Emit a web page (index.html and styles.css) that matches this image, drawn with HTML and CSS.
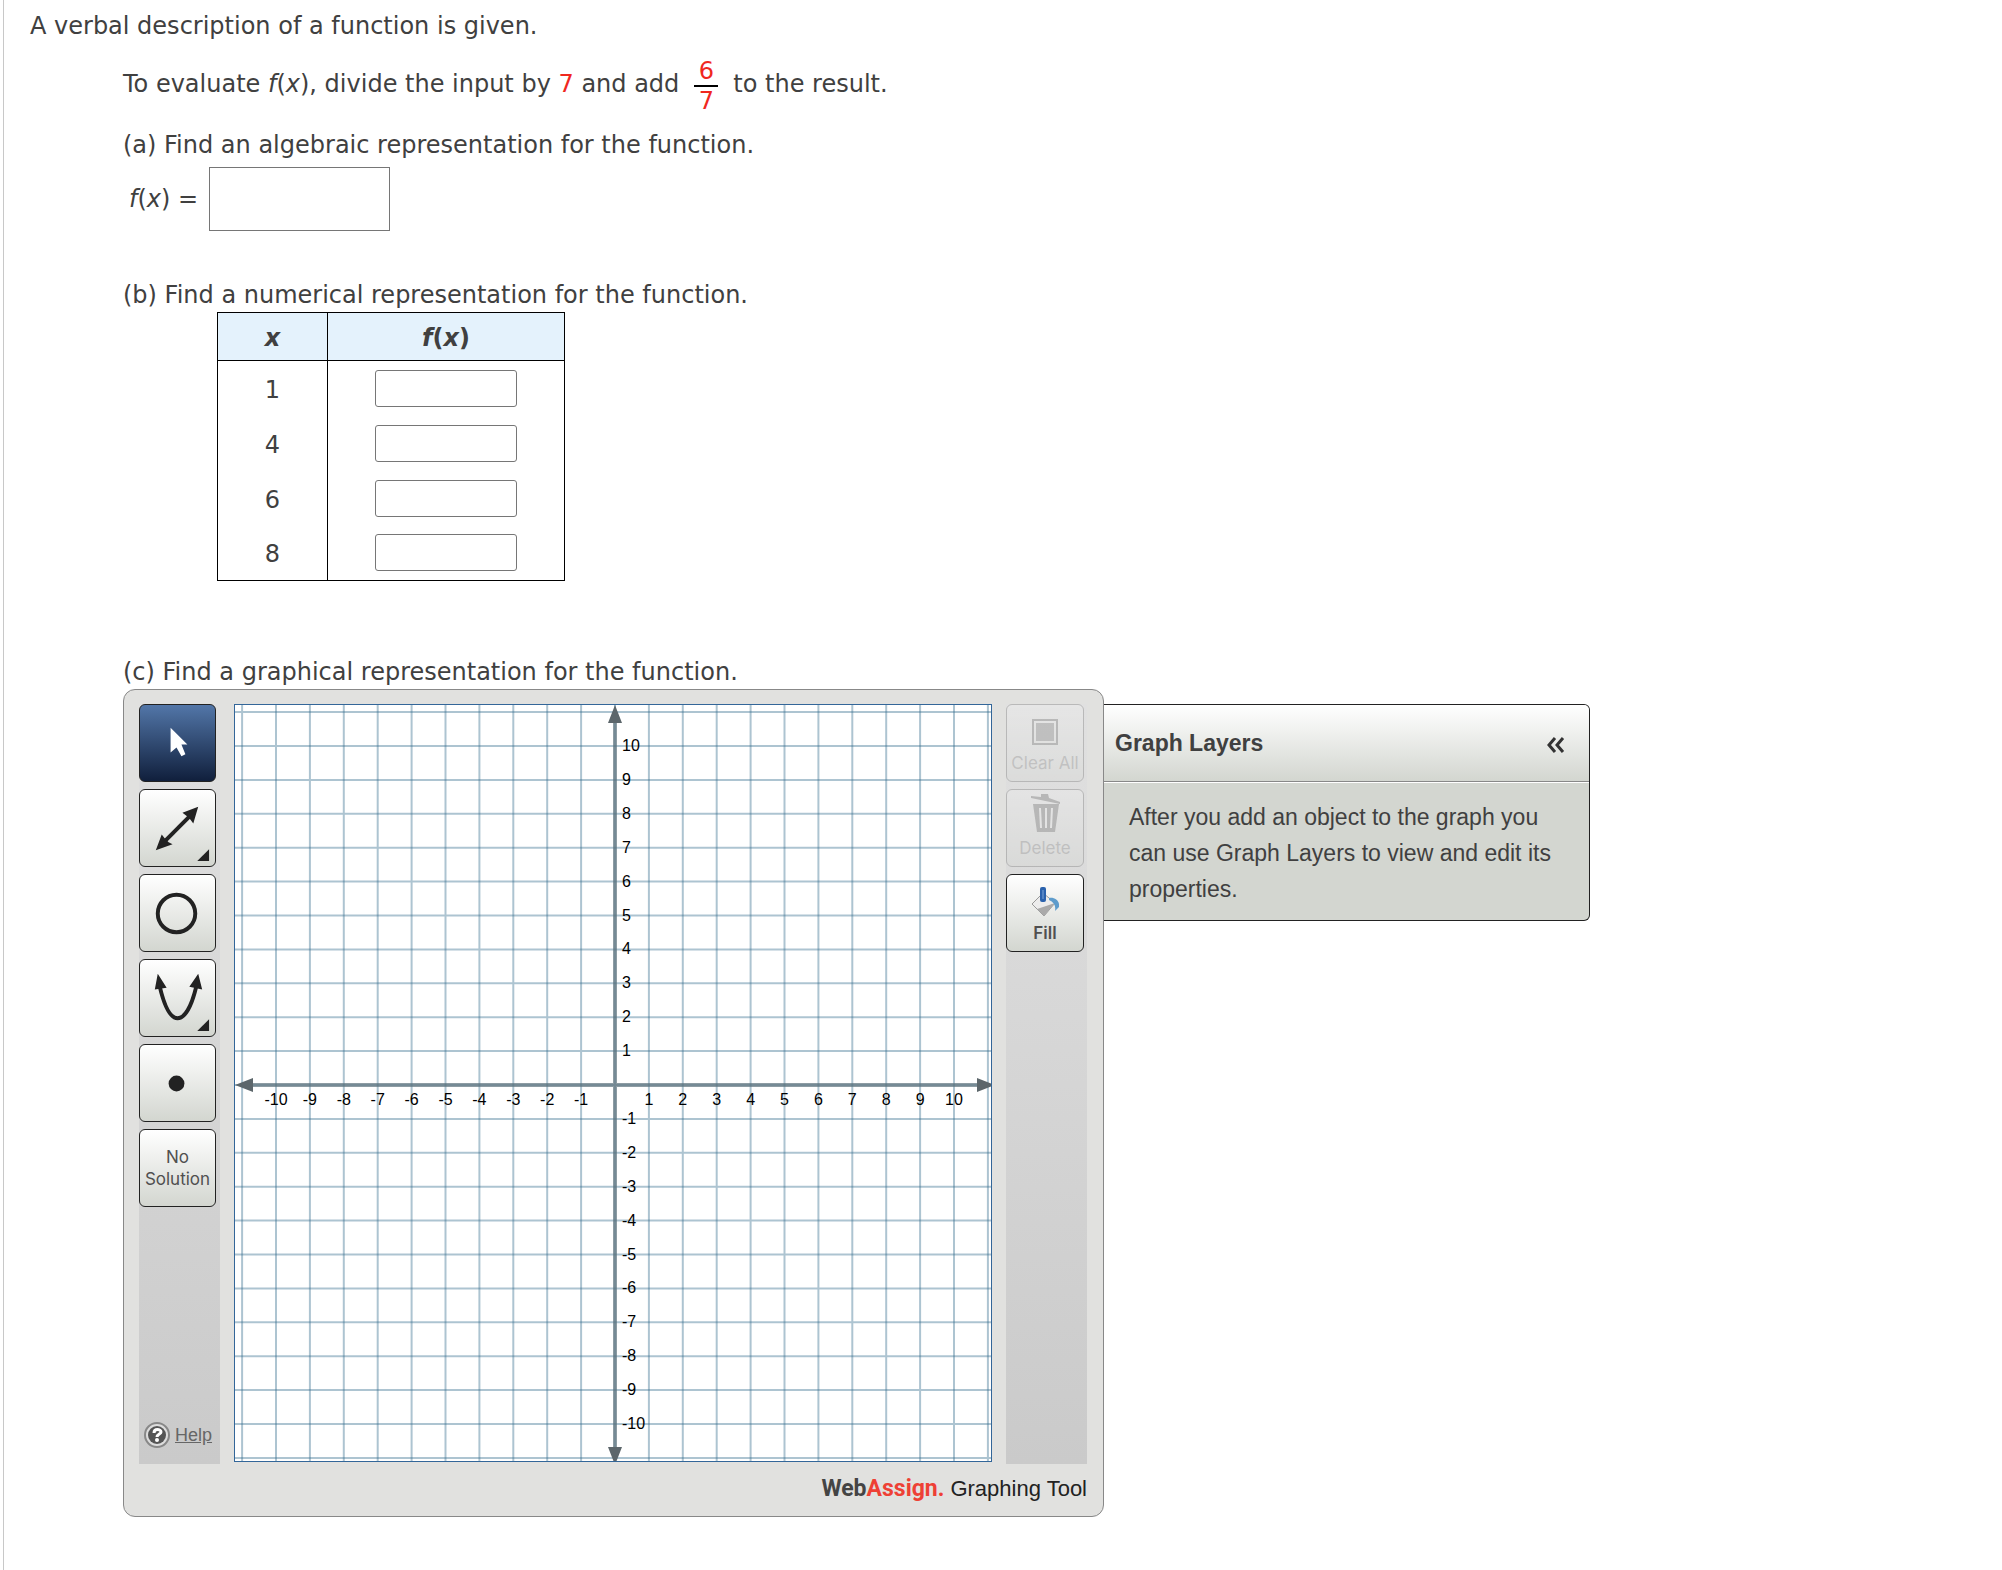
FILE: index.html
```html
<!DOCTYPE html>
<html lang="en">
<head>
    <meta charset="UTF-8">
    <meta name="viewport" content="width=device-width, initial-scale=1.0">
    <title>Representations of a Function</title>
    <link rel="stylesheet" href="styles.css">
</head>
<body>
    <main class="question">
        <p class="intro">A verbal description of a function is given.</p>

        <div class="parts">
            <p class="statement">
                <span>To evaluate <i>f</i>(<i>x</i>), divide the input by <span class="value">7</span> and add</span>
                <span class="fraction">
                    <span class="numerator value">6</span>
                    <span class="value">7</span>
                </span>
                <span>to the result.</span>
            </p>

            <section class="part-a">
                <p>(a) Find an algebraic representation for the function.</p>
                <div class="answer">
                    <label for="formula"><i>f</i>(<i>x</i>) =</label>
                    <input class="formula" id="formula" type="text">
                </div>
            </section>

            <section class="part-b">
                <p>(b) Find a numerical representation for the function.</p>
                <table class="values">
                    <thead>
                        <tr><th class="col-x"><i>x</i></th><th class="col-f"><i>f</i>(<i>x</i>)</th></tr>
                    </thead>
                    <tbody>
                        <tr><td><label for="f1">1</label></td><td><input id="f1" type="text"></td></tr>
                        <tr><td><label for="f4">4</label></td><td><input id="f4" type="text"></td></tr>
                        <tr><td><label for="f6">6</label></td><td><input id="f6" type="text"></td></tr>
                        <tr><td><label for="f8">8</label></td><td><input id="f8" type="text"></td></tr>
                    </tbody>
                </table>
            </section>

            <section class="part-c">
                <p>(c) Find a graphical representation for the function.</p>
                <div class="graph-row">
                    <div class="graph-tool">
                        <div class="workspace">
                            <div class="toolbar">
                                <button class="tool active" type="button" aria-label="Select">
                                    <svg viewBox="0 0 76 76"><path d="M31 22v25l6-5 5 9 4-2-4-10h6z" fill="#fff"/></svg>
                                </button>
                                <button class="tool" type="button" aria-label="Line">
                                    <svg viewBox="0 0 76 76">
                                        <path d="M24 52L52 24" stroke="#222" stroke-width="4"/>
                                        <path d="M59 16l-16 6 4 3 4 4 3 4zM16 60l6-16 3 4 4 4 4 2z" fill="#222"/>
                                        <path d="M70 59v12H58z" fill="#222"/>
                                    </svg>
                                </button>
                                <button class="tool" type="button" aria-label="Circle">
                                    <svg viewBox="0 0 76 76"><circle cx="37" cy="38" r="19" fill="none" stroke="#222" stroke-width="4"/></svg>
                                </button>
                                <button class="tool" type="button" aria-label="Parabola">
                                    <svg viewBox="0 0 76 76">
                                        <path d="M20 26C25 47 31 58 38 58S52 47 57 26" fill="none" stroke="#222" stroke-width="4"/>
                                        <path d="M18 13l9 14-12 2zM59 13l4 16-13-3z" fill="#222"/>
                                        <path d="M70 59v12H58z" fill="#222"/>
                                    </svg>
                                </button>
                                <button class="tool" type="button" aria-label="Point">
                                    <svg viewBox="0 0 76 76"><circle cx="37" cy="38" r="8" fill="#222"/></svg>
                                </button>
                                <button class="tool" type="button">No<br>Solution</button>
                                <a class="help" href="#help">
                                    <svg class="help-icon" viewBox="0 0 26 26">
                                        <circle cx="13" cy="13" r="12" fill="#ddd" stroke="#888" stroke-width="2"/>
                                        <circle cx="13" cy="13" r="9" fill="#555"/>
                                        <path d="M10 11c0-5 7-4 7-1 0 2-4 2-4 5" fill="none" stroke="#fff" stroke-width="3"/>
                                        <circle cx="13" cy="18" r="2" fill="#fff"/>
                                    </svg>
                                    <span>Help</span>
                                </a>
                            </div>

                            <svg class="graph" id="graph" viewBox="0 0 756 756" role="img" aria-label="Coordinate plane">
                                <g class="grid" id="grid"></g>
                                <path class="axis" d="M6 380H750M380 6V750"/>
                                <path class="arrow" d="M0 380l18-7v14zM760 380l-18-7v14zM380 0l-7 18h14zM380 760l-7-18h14z"/>
                                <g class="ticks" id="ticks"></g>
                            </svg>

                            <div class="toolbar">
                                <button class="tool action" type="button" disabled>
                                    <svg class="action-icon" viewBox="0 0 28 32">
                                        <rect x="2" y="4" width="24" height="24" fill="none" stroke="#222" stroke-width="2"/>
                                        <rect x="5" y="7" width="18" height="18" fill="#444"/>
                                    </svg>
                                    <span>Clear All</span>
                                </button>
                                <button class="tool action" type="button" disabled>
                                    <svg class="trash-icon" viewBox="0 0 32 40">
                                        <path d="M2 3l10 1V1h7l1 4 11 4v2L2 5z" fill="#222"/>
                                        <path d="M4 11h26l-4 28H8z" fill="#222"/>
                                        <path d="M11 15l1 20M17 15v20M23 15l-1 20" stroke="#fff" stroke-width="2"/>
                                    </svg>
                                    <span>Delete</span>
                                </button>
                                <button class="tool action" type="button">
                                    <svg class="action-icon" viewBox="0 0 28 32">
                                        <path d="M1 18l11-11 12 10-11 13z" fill="#ececec" stroke="#999"/>
                                        <path d="M6 23l18-6-11 13z" fill="#aaa"/>
                                        <path d="M18 12c6-1 11 3 10 9l-4 4c1-5-1-9-6-11z" fill="#5e9ccc"/>
                                        <rect x="9" y="1" width="6" height="15" rx="2" fill="#2b62ad"/>
                                        <path d="M12 4v9" stroke="#5585c4" stroke-width="2"/>
                                    </svg>
                                    <span class="fill-label">Fill</span>
                                </button>
                            </div>
                        </div>
                        <footer class="brand">
                            <b class="brand-name">Web<span class="brand-accent">Assign.</span></b>
                            <span>Graphing Tool</span>
                        </footer>
                    </div>

                    <aside class="layers">
                        <header class="layers-header">
                            <h2>Graph Layers</h2>
                            <button class="collapse" type="button" aria-label="Collapse">
                                <svg viewBox="0 0 18 16"><path d="M8 1L2 8l6 7M16 1l-6 7 6 7" fill="none" stroke="#333" stroke-width="3"/></svg>
                            </button>
                        </header>
                        <p class="layers-body">After you add an object to the graph you can use Graph Layers to view and edit its properties.</p>
                    </aside>
                </div>
            </section>
        </div>
    </main>

    <script>
        const grid = document.getElementById('grid');
        const ticks = document.getElementById('ticks');
        const center = 380;
        const unit = 33.9;

        function add(parent, name, attrs, text) {
            const el = document.createElementNS('http://www.w3.org/2000/svg', name);
            for (const key in attrs) {
                el.setAttribute(key, attrs[key]);
            }
            if (text !== undefined) {
                el.textContent = text;
            }
            parent.appendChild(el);
        }

        // Grid lines run one unit past the last label
        for (let i = -11; i <= 11; i++) {
            const pos = center + i * unit;
            add(grid, 'path', { d: `M${pos} 0V756M0 ${pos}H756` });

            if (i !== 0 && Math.abs(i) <= 10) {
                add(ticks, 'text', { x: pos, y: center + 20, 'text-anchor': 'middle' }, i);
                add(ticks, 'text', { x: center + 7, y: center - i * unit + 5 }, i);
            }
        }
    </script>
</body>
</html>
```
FILE: styles.css
```css
* {
    box-sizing: border-box;
}

body {
    margin: 0;
    padding-left: 3px;
    background: #fff;
    color: #404040;
    font-family: Verdana, "DejaVu Sans", sans-serif;
    font-size: 24px;
    line-height: 28px;
}

p, h2 {
    margin: 0;
}

input {
    border: 1px solid #767676;
    background: #fff;
    font: inherit;
}

button {
    font: inherit;
}

.question {
    min-height: 100vh;
    padding: 12px 26px;
    border-left: 1px solid #c8c8c8;
}

.parts {
    padding-left: 93px;
}

.statement {
    display: flex;
    align-items: center;
    gap: 15px;
    margin-top: 13px;
}

.value {
    color: #f0281e;
}

.fraction {
    display: flex;
    flex-direction: column;
    width: 24px;
    padding-top: 4px;
    text-align: center;
}

.numerator {
    border-bottom: 2px solid #000;
}

.part-a {
    margin-top: 16px;
}

.answer {
    display: flex;
    align-items: center;
    gap: 11px;
    margin-top: 8px;
    padding-left: 6px;
}

.formula {
    width: 181px;
    height: 64px;
}

.part-b {
    margin-top: 50px;
}

.values {
    margin: 3px 0 0 94px;
    border: 1px solid #000;
    border-collapse: collapse;
    text-align: center;
}

.values th {
    height: 48px;
    padding: 2px 0 0;
    border: 1px solid #000;
    background: #e4f2fc;
}

.values td {
    height: 55px;
    padding: 0;
    border-right: 1px solid #000;
}

.values label {
    display: block;
    padding-top: 3px;
}

.values input {
    display: block;
    width: 142px;
    height: 37px;
    margin: 0 auto;
    border-radius: 3px;
}

.col-x {
    width: 110px;
}

.col-f {
    width: 237px;
}

.part-c {
    margin-top: 77px;
}

.graph-row {
    display: flex;
    align-items: flex-start;
    margin-top: 3px;
}

.graph-tool {
    padding: 14px 16px 13px 15px;
    border: 1px solid #888;
    border-radius: 12px;
    background: #e1e1df;
}

.workspace {
    display: flex;
    gap: 14px;
}

.toolbar {
    display: flex;
    flex-direction: column;
    gap: 7px;
    width: 81px;
    height: 760px;
    background: linear-gradient(#e0e0e0, #cacaca);
}

.tool {
    display: flex;
    flex-direction: column;
    align-items: center;
    justify-content: center;
    width: 77px;
    height: 78px;
    padding: 0;
    border: 1px solid #222;
    border-radius: 6px;
    background: linear-gradient(#fff, #d3d6d0);
    color: #505050;
    font-family: Inter, sans-serif;
    font-size: 17px;
    line-height: 22px;
}

.tool.active {
    background: linear-gradient(#5276a8, #101f3c);
}

.tool.action {
    justify-content: flex-end;
    gap: 4px;
    width: 78px;
    padding-bottom: 7px;
}

.tool:disabled {
    opacity: 0.2;
}

.tool .action-icon {
    width: 28px;
    height: 32px;
}

.tool .trash-icon {
    width: 32px;
    height: 40px;
}

.fill-label {
    font-weight: 600;
}

.help {
    display: flex;
    align-items: center;
    gap: 5px;
    margin-top: auto;
    padding: 0 0 15px 5px;
    color: #666;
    font-family: Arial, "Liberation Sans", sans-serif;
    font-size: 18px;
}

.help-icon {
    width: 26px;
    height: 26px;
}

.graph {
    width: 758px;
    height: 758px;
    border: 1px solid #336699;
    background: #fff;
}

.grid {
    stroke: #336b8c;
    stroke-opacity: 0.4;
    stroke-width: 2;
}

.axis {
    stroke: #5c727c;
    stroke-opacity: 0.7;
    stroke-width: 4;
}

.arrow {
    fill: #5c666b;
}

.ticks {
    fill: #000;
    font-family: Arial, "Liberation Sans", sans-serif;
    font-size: 16px;
}

.brand {
    display: flex;
    justify-content: flex-end;
    gap: 6px;
    margin-top: 11px;
    color: #222;
    font-family: Arial, "Liberation Sans", sans-serif;
    font-size: 22px;
}

.brand-name {
    color: #444;
    font-family: Roboto, sans-serif;
    font-size: 23px;
}

.brand-accent {
    color: #ee4035;
}

.layers {
    width: 486px;
    margin-top: 15px;
    border: 1px solid #222;
    border-left: 0;
    border-radius: 0 6px 6px 0;
    background: #d3d6d0;
    font-family: Arial, "Liberation Sans", sans-serif;
    font-size: 23px;
    overflow: hidden;
}

.layers-header {
    display: flex;
    align-items: center;
    justify-content: space-between;
    height: 77px;
    padding: 0 24px 0 11px;
    border-bottom: 1px solid #888;
    background: linear-gradient(#fff, #d3d6d0);
}

.layers-header h2 {
    font-size: 23px;
}

.collapse {
    display: flex;
    padding: 4px 0 0;
    border: 0;
    background: none;
}

.collapse svg {
    width: 18px;
    height: 16px;
}

.layers-body {
    padding: 16px 25px 13px;
    border-top: 1px solid #fff;
    line-height: 36px;
}
```
